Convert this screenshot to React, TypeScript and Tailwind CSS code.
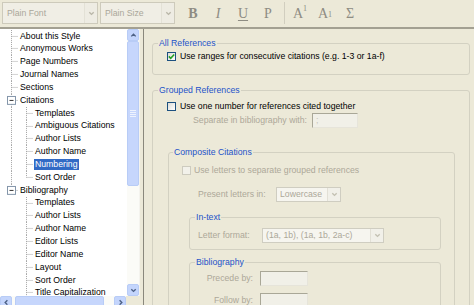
import React from 'react';
import clsx from 'clsx';

type TreeItem = {
  label: string;
  level: 1 | 2;
  open?: boolean;
  trunk?: boolean;
  last?: boolean;
  selected?: boolean;
};

const treeItems: TreeItem[] = [
  { label: 'About this Style', level: 1 },
  { label: 'Anonymous Works', level: 1 },
  { label: 'Page Numbers', level: 1 },
  { label: 'Journal Names', level: 1 },
  { label: 'Sections', level: 1 },
  { label: 'Citations', level: 1, open: true },
  { label: 'Templates', level: 2, trunk: true },
  { label: 'Ambiguous Citations', level: 2, trunk: true },
  { label: 'Author Lists', level: 2, trunk: true },
  { label: 'Author Name', level: 2, trunk: true },
  { label: 'Numbering', level: 2, trunk: true, selected: true },
  { label: 'Sort Order', level: 2, trunk: true, last: true },
  { label: 'Bibliography', level: 1, open: true, last: true },
  { label: 'Templates', level: 2 },
  { label: 'Author Lists', level: 2 },
  { label: 'Author Name', level: 2 },
  { label: 'Editor Lists', level: 2 },
  { label: 'Editor Name', level: 2 },
  { label: 'Layout', level: 2 },
  { label: 'Sort Order', level: 2 },
  { label: 'Title Capitalization', level: 2 },
];

const LINE = '#a5a5a5';

// tree connector for the first column (x 0..18)
const RootLines = ({ item }: { item: TreeItem }) => {
  const isRoot = item.level === 1;
  const showTrunk = isRoot || item.trunk;
  const trunkEnd = isRoot && item.last ? 6.5 : 13;
  return (
    <svg width="18" height="100%" viewBox="0 0 18 13" preserveAspectRatio="none" className="h-full shrink-0">
      {showTrunk && (
        <line x1="11.5" y1="0" x2="11.5" y2={trunkEnd} stroke={LINE} strokeDasharray="1 1" />
      )}
      {isRoot && (
        <line x1={item.open ? 15.5 : 11.5} y1="6.5" x2="18" y2="6.5" stroke={LINE} strokeDasharray="1 1" />
      )}
      {isRoot && item.open && (
        <g>
          <rect x="7.5" y="2.5" width="8" height="8" fill="#fff" stroke="#8496aa" />
          <line x1="9.5" y1="6.5" x2="13.5" y2="6.5" stroke="#333" />
        </g>
      )}
    </svg>
  );
};

const ChildLines = ({ last }: { last?: boolean }) => (
  <svg width="15" height="100%" viewBox="0 0 15 13" preserveAspectRatio="none" className="h-full shrink-0">
    <line x1="8.5" y1="0" x2="8.5" y2={last ? 6.5 : 13} stroke={LINE} strokeDasharray="1 1" />
    <line x1="8.5" y1="6.5" x2="15" y2="6.5" stroke={LINE} strokeDasharray="1 1" />
  </svg>
);

const Chevron = ({ dir, color, size = 7 }: { dir: 'up' | 'down' | 'left' | 'right'; color: string; size?: number }) => {
  const paths = {
    up: 'M1.5 5 L4 2.5 L6.5 5',
    down: 'M1.5 2.5 L4 5 L6.5 2.5',
    left: 'M5 1.5 L2.5 4 L5 6.5',
    right: 'M3 1.5 L5.5 4 L3 6.5',
  };
  return (
    <svg width={size} height={size} viewBox="0 0 8 8">
      <path d={paths[dir]} fill="none" stroke={color} strokeWidth="1.6" />
    </svg>
  );
};

const ScrollButton = ({ dir }: { dir: 'up' | 'down' | 'left' | 'right' }) => (
  <div className="flex h-[12px] w-[12px] shrink-0 items-center justify-center rounded-[2px] border border-[#b8ccf6] bg-[#c4d5fc]">
    <Chevron dir={dir} color="#4d6185" />
  </div>
);

const Check = ({ checked, disabled }: { checked?: boolean; disabled?: boolean }) => (
  <span
    className={clsx(
      'flex h-[9px] w-[9px] shrink-0 items-center justify-center border',
      disabled ? 'border-[#cdcbbf] bg-[#f2f1ea]' : 'border-[#1c5180] bg-linear-to-br from-[#dcdcd7] to-white'
    )}
  >
    {checked && (
      <svg width="7" height="7" viewBox="0 0 7 7">
        <path d="M0.8 3.4 L2.7 5.3 L6.2 1.4" fill="none" stroke="#21a121" strokeWidth="1.5" />
      </svg>
    )}
  </span>
);

const Field = ({ value, className }: { value?: string; className: string }) => (
  <span
    className={clsx(
      'block h-[15px] border border-t-[#a9a797] border-l-[#a9a797] border-r-[#e6e4da] border-b-[#e6e4da] bg-[#f1f0e8] pl-[3px] leading-[13px] text-[#c4c2b6]',
      className
    )}
  >
    {value}
  </span>
);

const Select = ({ value, className }: { value: string; className: string }) => (
  <div className={clsx('flex h-[15px] shrink-0 border border-[#cfcdc1] bg-[#f6f5ef]', className)}>
    <span className="flex-1 overflow-hidden whitespace-nowrap pl-[3px] leading-[13px] text-[#aca899]">{value}</span>
    <span className="flex w-[13px] items-center justify-center border-l border-[#e2e0d6] bg-[#f1f0e9]">
      <Chevron dir="down" color="#c3c0b2" />
    </span>
  </div>
);

const Combo = ({ label, className }: { label: string; className: string }) => (
  <div className={clsx('flex h-[22px] border border-[#cdcabb] bg-[#f0eee5]', className)}>
    <span className="flex-1 pl-[4px] leading-[20px] text-[#aaa79a]">{label}</span>
    <span className="flex w-[13px] items-center justify-center border-l border-[#e3e1d6] bg-[#eeece3]">
      <Chevron dir="down" color="#b9b6a8" />
    </span>
  </div>
);

const ToolButton = ({ children, className }: { children: React.ReactNode; className?: string }) => (
  <span className={clsx("flex w-[25px] items-center justify-center font-['Liberation_Serif',serif] text-[14px] text-[#8e8c83]", className)}>
    {children}
  </span>
);

const legendCls = 'ml-[5px] px-[1px] leading-[11px] text-[#2453c9]';
const groupCls = 'rounded-[3px] border border-[#d3d1c2]';

export default function App() {
  return (
    <div className="h-[305px] w-[474px] overflow-hidden bg-[#ece9d8] font-['Liberation_Sans',Arial,sans-serif] text-[8.7px] text-black">
      {/* Toolbar */}
      <div className="flex h-[29px] items-center border-b-2 border-[#a3a092] pb-[1px]">
        <Combo label="Plain Font" className="ml-[2px] w-[96px]" />
        <Combo label="Plain Size" className="ml-[2px] w-[75px]" />
        <div className="ml-[5.5px] flex h-[22px]">
          <ToolButton className="font-bold">B</ToolButton>
          <ToolButton className="italic">I</ToolButton>
          <ToolButton className="underline underline-offset-2">U</ToolButton>
          <ToolButton>P</ToolButton>
          <span className="mx-[3px] w-px self-stretch bg-[#d1cebf]" />
          <ToolButton>
            A<sup className="text-[8px]">1</sup>
          </ToolButton>
          <ToolButton>
            A<sub className="text-[8px]">1</sub>
          </ToolButton>
          <ToolButton>Σ</ToolButton>
        </div>
      </div>

      <div className="flex">
        {/* Tree */}
        <div className="flex h-[280px] w-[140px] flex-col bg-white">
          <div className="flex h-[267px]">
            <div className="flex-1 overflow-hidden pt-[0.6px]">
              {treeItems.map((item, i) => (
                <div key={i} className="flex h-[12.85px] items-center whitespace-nowrap">
                  <RootLines item={item} />
                  {item.level === 2 && <ChildLines last={item.last} />}
                  <span
                    className={clsx(
                      'leading-[11px]',
                      item.selected ? 'ml-[1px] bg-[#316ac5] px-[1px] text-white' : 'ml-[2px]'
                    )}
                  >
                    {item.label}
                  </span>
                </div>
              ))}
            </div>
            <div className="flex w-[12px] flex-col bg-[#fbfbf7]">
              <ScrollButton dir="up" />
              <div className="flex h-[145px] flex-col items-center justify-center gap-[1px] rounded-[2px] border border-[#b8ccf6] bg-[#c6d6fc]">
                <span className="h-px w-[6px] bg-[#eef3fe]" />
                <span className="h-px w-[6px] bg-[#eef3fe]" />
                <span className="h-px w-[6px] bg-[#eef3fe]" />
                <span className="h-px w-[6px] bg-[#eef3fe]" />
              </div>
              <div className="flex-1" />
              <ScrollButton dir="down" />
            </div>
            <div className="w-px bg-[#f4f3ee]" />
          </div>
          <div className="flex h-[13px] bg-[#fbfbf7]">
            <ScrollButton dir="left" />
            <div className="flex flex-1 pl-[3px]">
              <div className="h-[12px] w-[89px] rounded-[2px] border border-[#b8ccf6] bg-[#c6d6fc]" />
            </div>
            <ScrollButton dir="right" />
            <div className="w-[14px] bg-[#ece9d8]" />
          </div>
        </div>

        {/* Splitter */}
        <div className="flex w-[7px] justify-center">
          <div className="w-px bg-[#8a887c]" />
        </div>

        {/* Settings */}
        <div className="flex-1 pl-[5px] pr-[4px] pt-[9px]">
          <fieldset className={clsx(groupCls, 'pb-[12px]')}>
            <legend className={legendCls}>All References</legend>
            <label className="mt-[2px] flex h-[11px] items-center pl-[14px] whitespace-nowrap">
              <Check checked />
              <span className="ml-[4px]">Use ranges for consecutive citations (e.g. 1-3 or 1a-f)</span>
            </label>
          </fieldset>

          <fieldset className={clsx(groupCls, 'mt-[10px] pb-[20px]')}>
            <legend className={legendCls}>Grouped References</legend>
            <label className="mt-[5px] flex h-[11px] items-center pl-[14px] whitespace-nowrap">
              <Check />
              <span className="ml-[4px]">Use one number for references cited together</span>
            </label>
            <div className="mt-[1px] flex h-[15px] items-center whitespace-nowrap">
              <span className="w-[154px] text-right text-[#aca899]">Separate in bibliography with:</span>
              <Field value=";" className="ml-[5px] w-[46px]" />
            </div>

            <fieldset className={clsx(groupCls, 'ml-[15px] mr-[14px] mt-[19px] pb-[20px]')}>
              <legend className="ml-[4px] px-[1px] leading-[11px] text-[#2453c9]">Composite Citations</legend>
              <label className="mt-[7px] flex h-[11px] items-center pl-[13px] whitespace-nowrap">
                <Check disabled />
                <span className="ml-[3px] text-[#aca899]">Use letters to separate grouped references</span>
              </label>
              <div className="mt-[11px] flex h-[15px] items-center whitespace-nowrap pl-[29px]">
                <span className="w-[78px] text-[#aca899]">Present letters in:</span>
                <Select value="Lowercase" className="w-[65px]" />
              </div>

              <fieldset className={clsx(groupCls, 'ml-[20px] mr-[13px] mt-[10px] pb-[6px]')}>
                <legend className={legendCls}>In-text</legend>
                <div className="mt-[5px] flex h-[15px] items-center whitespace-nowrap pl-[8px]">
                  <span className="w-[64px] text-[#aca899]">Letter format:</span>
                  <Select value="(1a, 1b), (1a, 1b, 2a-c)" className="w-[122px]" />
                </div>
              </fieldset>

              <fieldset className={clsx(groupCls, 'ml-[20px] mr-[13px] mt-[7px] pb-[8px]')}>
                <legend className={legendCls}>Bibliography</legend>
                <div className="mt-[3px] flex h-[15px] items-center whitespace-nowrap">
                  <span className="w-[63px] text-right text-[#aca899]">Precede by:</span>
                  <Field className="ml-[7px] w-[48px]" />
                </div>
                <div className="mt-[7px] flex h-[15px] items-center whitespace-nowrap">
                  <span className="w-[63px] text-right text-[#aca899]">Follow by:</span>
                  <Field className="ml-[7px] w-[48px]" />
                </div>
              </fieldset>
            </fieldset>
          </fieldset>
        </div>
      </div>
    </div>
  );
}
